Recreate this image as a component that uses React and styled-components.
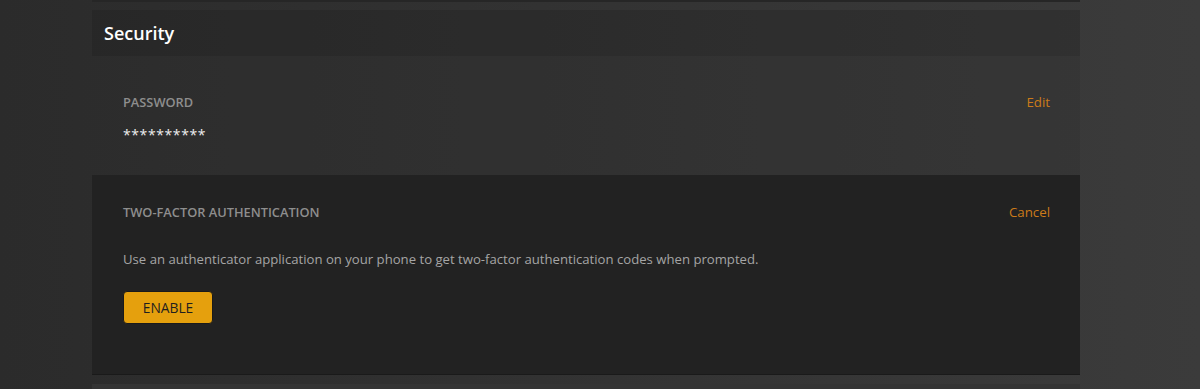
import React from 'react';
import styled, { createGlobalStyle } from 'styled-components';

const GlobalStyle = createGlobalStyle`
    html, body {
        margin: 0;
        padding: 0;
        height: 100%;
    }
    body {
        background: linear-gradient(to right, #2b2b2b 0%, #323232 45%, #3b3b3b 100%);
        font-family: "Open Sans", "Noto Sans", sans-serif;
        overflow: hidden;
    }
`;

const Page = styled.div`
    width: 988px;
    margin-left: 92px;
    height: 389px;
    display: flex;
    flex-direction: column;
`;

const PrevCardEdge = styled.div`
    height: 2px;
    background: #262626;
    margin-bottom: 8px;
`;

const Card = styled.section`
    display: flex;
    flex-direction: column;
`;

const CardHeader = styled.div`
    height: 46px;
    display: flex;
    align-items: center;
    padding: 0 12px;
    background: rgba(30, 30, 30, 0.3);
`;

const CardTitle = styled.h2`
    margin: 0;
    font-size: 18px;
    font-weight: 600;
    color: #ffffff;
`;

const Block = styled.div`
    padding: ${(p) => p.$top}px 30px ${(p) => p.$bottom}px 31px;
    background: ${(p) => (p.$active ? '#222222' : 'rgba(48, 48, 48, 0.3)')};
    border-bottom: ${(p) => (p.$active ? '1px solid #1a1a1a' : 'none')};
`;

const BlockTop = styled.div`
    display: flex;
    justify-content: space-between;
    align-items: center;
`;

const Label = styled.div`
    font-size: 12.8px;
    font-weight: 600;
    color: #8e8e8e;
    line-height: 16px;
`;

const Action = styled.a`
    font-size: 13.3px;
    color: #cc7b19;
    cursor: pointer;
    line-height: 16px;
`;

const Value = styled.div`
    margin-top: 16px;
    font-size: 14px;
    color: #eeeeee;
    line-height: 18px;
    letter-spacing: 0.6px;
`;

const Description = styled.p`
    margin: 30px 0 0;
    font-size: 13.15px;
    color: #a5a5a5;
    line-height: 18px;
`;

const EnableButton = styled.button`
    margin-top: 23px;
    width: 90px;
    height: 33px;
    border: 1px solid #1a1a1a;
    border-radius: 4px;
    background: #e5a00d;
    color: #1f1f1f;
    font-family: "Open Sans", "Noto Sans", sans-serif;
    font-size: 13.8px;
    cursor: pointer;
`;

const NextCardEdge = styled.div`
    margin-top: 9px;
    flex: 1;
    background: #343434;
`;

export default function App() {
    return (
        <>
            <GlobalStyle />
            <Page>
                <PrevCardEdge />
                <Card>
                    <CardHeader>
                        <CardTitle>Security</CardTitle>
                    </CardHeader>
                    <Block $top={38} $bottom={31}>
                        <BlockTop>
                            <Label>PASSWORD</Label>
                            <Action>Edit</Action>
                        </BlockTop>
                        <Value>**********</Value>
                    </Block>
                    <Block $active $top={29} $bottom={50}>
                        <BlockTop>
                            <Label>TWO-FACTOR AUTHENTICATION</Label>
                            <Action>Cancel</Action>
                        </BlockTop>
                        <Description>
                            Use an authenticator application on your phone to get two-factor authentication codes when prompted.
                        </Description>
                        <EnableButton>ENABLE</EnableButton>
                    </Block>
                </Card>
                <NextCardEdge />
            </Page>
        </>
    );
}
